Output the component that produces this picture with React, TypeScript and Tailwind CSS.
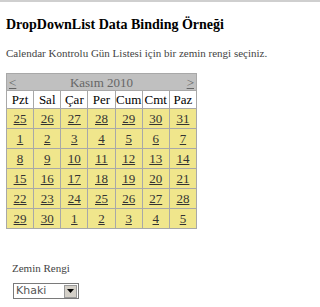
import React from 'react';

const days = ['Pzt', 'Sal', 'Çar', 'Per', 'Cum', 'Cmt', 'Paz'];
const weeks = [
  [25, 26, 27, 28, 29, 30, 31],
  [1, 2, 3, 4, 5, 6, 7],
  [8, 9, 10, 11, 12, 13, 14],
  [15, 16, 17, 18, 19, 20, 21],
  [22, 23, 24, 25, 26, 27, 28],
  [29, 30, 1, 2, 3, 4, 5],
];

export default function App() {
  return (
    <div className="w-[320px] h-[307px] bg-white border-t-2 border-[#cfcfcf] overflow-hidden" style={{ fontFamily: '"Liberation Serif", serif' }}>
      <div className="px-[6px]">
        <h1 className="pt-[14px] text-[14px] font-bold leading-[18px] text-black">DropDownList Data Binding Örneği</h1>
        <p className="mt-[12px] text-[11px] leading-[14px] text-[#444]">Calendar Kontrolu Gün Listesi için bir zemin rengi seçiniz.</p>

        <table className="mt-[13px] w-[191px] table-fixed border-collapse text-[13px] text-[#222]">
          <tbody>
            <tr className="bg-[#c0c0c0] h-[17px]">
              <td colSpan={7} className="border border-[#a8a8a8] px-[2px] leading-[15px]">
                <div className="flex justify-between text-[#666]">
                  <span className="underline">&lt;</span>
                  <span>Kasım 2010</span>
                  <span className="underline">&gt;</span>
                </div>
              </td>
            </tr>
            <tr className="bg-white h-[18px]">
              {days.map((d) => (
                <td key={d} className="border border-[#a8a8a8] text-center leading-[16px] text-black">{d}</td>
              ))}
            </tr>
            {weeks.map((w, i) => (
              <tr key={i} className="bg-[#f0e68c] h-[20px]">
                {w.map((n, j) => (
                  <td key={j} className="border border-[#a8a8a8] text-center leading-[16px]">
                    <a href="#" className="underline text-[#333]">{n}</a>
                  </td>
                ))}
              </tr>
            ))}
          </tbody>
        </table>

        <div className="mt-[32px] pl-[6px] text-[11px] leading-[14px] text-[#444]">Zemin Rengi</div>
        <div className="mt-[8px] ml-[7px] w-[66px] h-[16px] flex items-center border border-[#7a7a7a] bg-white" style={{ fontFamily: '"DejaVu Sans", sans-serif' }}>
          <span className="flex-1 pl-[2px] text-[11px] leading-[14px] text-[#555]">Khaki</span>
          <span className="w-[13px] h-[13px] mr-[1px] bg-[#d4d0c8] border border-[#9a9a9a] flex items-center justify-center">
            <svg width="7" height="4" viewBox="0 0 7 4"><path d="M0 0h7L3.5 4z" fill="#000" /></svg>
          </span>
        </div>
      </div>
    </div>
  );
}
